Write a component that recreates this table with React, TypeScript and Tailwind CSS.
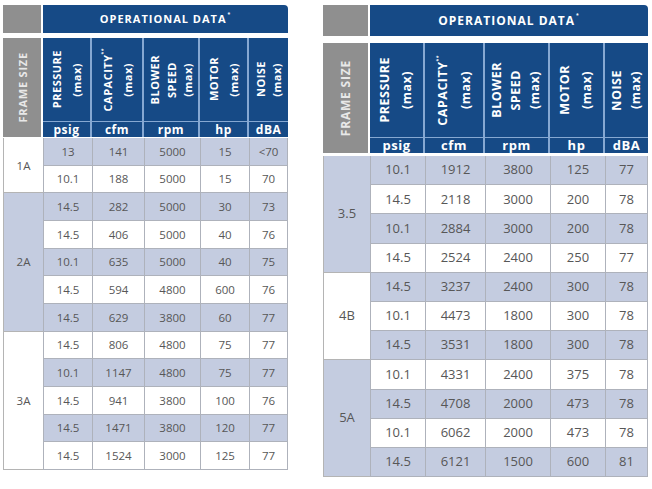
import type { ReactNode } from 'react';

type Group = { size: string; rows: string[][] };

interface TableSpec {
  frameW: string;
  gapTop: string;
  topH: string;
  topText: string;
  headH: string;
  colW: string[];
  labelText: string;
  unitText: string;
  frameText: string;
  gridCols: string;
  rowH: string;
  dataText: string;
  dataGap: string;
  shadeFrames: boolean[];
  groups: Group[];
}

const LABELS: string[][] = [
  ['PRESSURE', '(max)'],
  ['CAPACITY', '(max)'],
  ['BLOWER', 'SPEED', '(max)'],
  ['MOTOR', '(max)'],
  ['NOISE', '(max)'],
];
const UNITS = ['psig', 'cfm', 'rpm', 'hp', 'dBA'];

const LEFT: TableSpec = {
  frameW: 'w-[38px]',
  gapTop: 'mb-[5px]',
  topH: 'h-[28px]',
  topText: 'text-[11px]',
  headH: 'h-[83px]',
  colW: ['w-[47px]', 'w-[50px]', 'w-[54px]', 'w-[47px]', 'w-[39px]'],
  labelText: 'text-[11px]',
  unitText: 'text-[12px] h-[16px]',
  frameText: 'text-[11px]',
  gridCols: 'grid-cols-[40px_49px_52px_56px_49px_39px]',
  rowH: 'auto-rows-[27.67px]',
  dataText: 'text-[11.5px]',
  dataGap: 'mt-[1px]',
  shadeFrames: [false, true, false],
  groups: [
    {
      size: '1A',
      rows: [
        ['13', '141', '5000', '15', '<70'],
        ['10.1', '188', '5000', '15', '70'],
      ],
    },
    {
      size: '2A',
      rows: [
        ['14.5', '282', '5000', '30', '73'],
        ['14.5', '406', '5000', '40', '76'],
        ['10.1', '635', '5000', '40', '75'],
        ['14.5', '594', '4800', '600', '76'],
        ['14.5', '629', '3800', '60', '77'],
      ],
    },
    {
      size: '3A',
      rows: [
        ['14.5', '806', '4800', '75', '77'],
        ['10.1', '1147', '4800', '75', '77'],
        ['14.5', '941', '3800', '100', '76'],
        ['14.5', '1471', '3800', '120', '77'],
        ['14.5', '1524', '3000', '125', '77'],
      ],
    },
  ],
};

const RIGHT: TableSpec = {
  frameW: 'w-[45px]',
  gapTop: 'mb-[7px]',
  topH: 'h-[31px]',
  topText: 'text-[12px]',
  headH: 'h-[94px]',
  colW: ['w-[53px]', 'w-[58px]', 'w-[63px]', 'w-[53px]', 'w-[43px]'],
  labelText: 'text-[12.5px]',
  unitText: 'text-[13px] h-[16px]',
  frameText: 'text-[12px]',
  gridCols: 'grid-cols-[47px_55px_60px_65px_55px_43px]',
  rowH: 'auto-rows-[29.2px]',
  dataText: 'text-[13px]',
  dataGap: 'mt-[3px]',
  shadeFrames: [true, false, true],
  groups: [
    {
      size: '3.5',
      rows: [
        ['10.1', '1912', '3800', '125', '77'],
        ['14.5', '2118', '3000', '200', '78'],
        ['10.1', '2884', '3000', '200', '78'],
        ['14.5', '2524', '2400', '250', '77'],
      ],
    },
    {
      size: '4B',
      rows: [
        ['14.5', '3237', '2400', '300', '78'],
        ['10.1', '4473', '1800', '300', '78'],
        ['14.5', '3531', '1800', '300', '78'],
      ],
    },
    {
      size: '5A',
      rows: [
        ['10.1', '4331', '2400', '375', '78'],
        ['14.5', '4708', '2000', '473', '78'],
        ['10.1', '6062', '2000', '473', '78'],
        ['14.5', '6121', '1500', '600', '81'],
      ],
    },
  ],
};

const SPANS: Record<number, string> = {
  2: 'row-span-2',
  3: 'row-span-3',
  4: 'row-span-4',
  5: 'row-span-5',
};

const SHADE = 'bg-[#c4cce0]';

function Vertical({ children, className = '' }: { children: ReactNode; className?: string }) {
  return (
    <span className={`[writing-mode:vertical-rl] rotate-180 whitespace-nowrap leading-none ${className}`}>
      {children}
    </span>
  );
}

function SpecTable({ spec }: { spec: TableSpec }) {
  let rowIndex = 0;
  const cells: ReactNode[] = [];

  spec.groups.forEach((group, gi) => {
    cells.push(
      <div
        key={`f-${gi}`}
        className={`${SPANS[group.rows.length]} flex items-center justify-center border-l border-b border-[#b4b4b4] ${
          spec.shadeFrames[gi] ? SHADE : 'bg-white'
        }`}
      >
        {group.size}
      </div>,
    );
    group.rows.forEach((row) => {
      const shaded = rowIndex % 2 === 0;
      row.forEach((value, ci) => {
        cells.push(
          <div
            key={`${gi}-${rowIndex}-${ci}`}
            className={`flex items-center justify-center border-l border-b border-[#aeb2bb] ${
              shaded ? SHADE : 'bg-white'
            } ${ci === 4 ? 'border-r' : ''}`}
          >
            {value}
          </div>,
        );
      });
      rowIndex += 1;
    });
  });

  return (
    <div className="flex flex-col">
      <div className={`flex gap-[2px] ${spec.gapTop}`}>
        <div className={`${spec.frameW} ${spec.topH} bg-[#8f8f8f]`} />
        <div
          className={`flex-1 ${spec.topH} ${spec.topText} bg-[#164a86] rounded-tr-[4px] flex items-center justify-center font-bold tracking-[1px] text-white`}
        >
          OPERATIONAL DATA<sup className="text-[5px] -mt-[6px] ml-[1px]">*</sup>
        </div>
      </div>

      <div className="flex gap-[2px]">
        <div className={`${spec.frameW} bg-[#8f8f8f] flex items-center justify-center`}>
          <Vertical className={`${spec.frameText} font-bold tracking-[0.8px] text-[#e8e8e8]`}>FRAME SIZE</Vertical>
        </div>
        <div className="flex gap-[2px] bg-[#86a8d2]">
          {LABELS.map((lines, i) => (
            <div key={i} className={`${spec.colW[i]} flex flex-col bg-[#164a86] text-white`}>
              <div className={`${spec.headH} flex items-center justify-evenly ${spec.labelText} font-bold`}>
                {lines.map((line, li) => (
                  <Vertical key={li} className="tracking-[0.5px]">
                    {line}
                    {line === 'CAPACITY' && <span className="text-[5px] align-super">**</span>}
                  </Vertical>
                ))}
              </div>
              <div
                className={`${spec.unitText} border-t border-[#86a8d2] flex items-center justify-center font-bold tracking-[0.5px]`}
              >
                {UNITS[i]}
              </div>
            </div>
          ))}
        </div>
      </div>

      <div className={`grid ${spec.gridCols} ${spec.rowH} ${spec.dataGap} ${spec.dataText} text-[#575757]`}>
        {cells}
      </div>
    </div>
  );
}

export default function App() {
  return (
    <div className="w-[652px] h-[489px] bg-white font-['Open_Sans',sans-serif] flex gap-[35px] pl-[3px] pt-[5px] overflow-hidden">
      <SpecTable spec={LEFT} />
      <SpecTable spec={RIGHT} />
    </div>
  );
}
